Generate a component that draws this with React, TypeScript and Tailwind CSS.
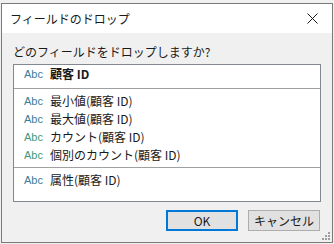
import React from "react";

const font = { fontFamily: '"Noto Sans CJK JP", "Noto Sans", sans-serif' };

type Field = { label: string; tone: "blue" | "green"; bold?: boolean };

const groups: Field[][] = [
  [{ label: "顧客 ID", tone: "blue", bold: true }],
  [
    { label: "最小値(顧客 ID)", tone: "blue" },
    { label: "最大値(顧客 ID)", tone: "blue" },
    { label: "カウント(顧客 ID)", tone: "green" },
    { label: "個別のカウント(顧客 ID)", tone: "green" },
  ],
  [{ label: "属性(顧客 ID)", tone: "blue" }],
];

function Row({ f }: { f: Field }) {
  return (
    <div className="flex h-[18px] items-center">
      <span
        className={`w-[36px] pl-[10px] text-[11px] ${
          f.tone === "blue" ? "text-[#3a7d9a]" : "text-[#3f9a7c]"
        }`}
        style={{ fontFamily: '"Liberation Sans", sans-serif' }}
      >
        Abc
      </span>
      <span className={`text-[12px] text-[#1a1a1a] ${f.bold ? "font-bold" : ""}`}>{f.label}</span>
    </div>
  );
}

export default function App() {
  return (
    <div className="h-[244px] w-[334px] bg-[#f0f0f0] pl-[1px] pt-[3px]" style={font}>
      <div className="flex h-[240px] w-[332px] flex-col border border-[#7a7a7a] bg-[#f0f0f0]">
        <div className="flex h-[29px] items-center justify-between bg-white pl-[8px] pr-[14px]">
          <span className="text-[12px] text-[#1a1a1a]">フィールドのドロップ</span>
          <svg width="11" height="11" viewBox="0 0 11 11">
            <path d="M0.5 0.5 L10.5 10.5 M10.5 0.5 L0.5 10.5" stroke="#1a1a1a" strokeWidth="1" />
          </svg>
        </div>
        <div className="relative flex flex-1 flex-col px-[11px]">
          <div className="mt-[11px] text-[12px] leading-[16px] text-[#1a1a1a]">どのフィールドをドロップしますか?</div>
          <div className="mt-[4px] h-[138px] border border-[#828790] bg-white">
            <div className="h-[23px]">
              <Row f={groups[0][0]} />
            </div>
            <div className="border-t border-[#a0a0a0] pb-[3px] pt-[3px]">
              {groups[1].map((f) => (
                <Row key={f.label} f={f} />
              ))}
            </div>
            <div className="border-t border-[#a0a0a0] pt-[3px]">
              {groups[2].map((f) => (
                <Row key={f.label} f={f} />
              ))}
            </div>
          </div>
          <div className="mt-[8px] flex justify-end gap-[10px] pr-[1px]">
            <button className="h-[21px] w-[72px] border-2 border-[#0078d7] bg-[#e1e1e1] text-[12px] text-[#1a1a1a]">
              OK
            </button>
            <button className="h-[21px] w-[72px] border border-[#adadad] bg-[#e1e1e1] text-[12px] text-[#1a1a1a]">
              キャンセル
            </button>
          </div>
          <svg className="absolute bottom-[2px] right-[2px]" width="8" height="8" viewBox="0 0 8 8">
            <g fill="#a0a0a0">
              <rect x="6" y="0" width="2" height="2" />
              <rect x="3" y="3" width="2" height="2" />
              <rect x="6" y="3" width="2" height="2" />
              <rect x="0" y="6" width="2" height="2" />
              <rect x="3" y="6" width="2" height="2" />
              <rect x="6" y="6" width="2" height="2" />
            </g>
          </svg>
        </div>
      </div>
    </div>
  );
}
